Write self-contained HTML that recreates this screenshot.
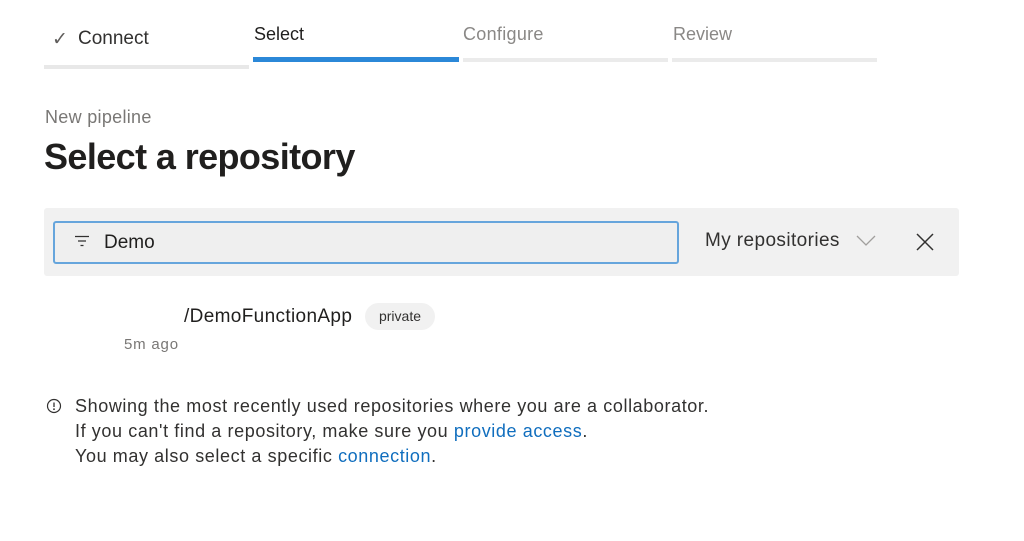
<!DOCTYPE html>
<html><head><meta charset="utf-8"><style>
body{margin:0;width:1024px;height:541px;background:#fff;font-family:"Liberation Sans",sans-serif;position:relative;overflow:hidden;color:#201f1e}
.a{position:absolute;white-space:nowrap}
</style></head><body>
<div class="a" style="left:52px;top:28px;font-size:19px;color:#605e5c">✓</div>
<div class="a" style="left:78px;top:28px;font-size:19px;color:#323130">Connect</div>
<div class="a" style="left:44px;top:65px;width:205px;height:4px;background:#e8e8e8"></div>
<div class="a" style="left:254px;top:24px;font-size:18px;color:#201f1e">Select</div>
<div class="a" style="left:253px;top:57px;width:206px;height:5px;background:#2b88d8"></div>
<div class="a" style="left:463px;top:24px;font-size:18px;color:#8a8886;letter-spacing:0.3px">Configure</div>
<div class="a" style="left:463px;top:58px;width:205px;height:4px;background:#ebebeb"></div>
<div class="a" style="left:673px;top:24px;font-size:18px;color:#8a8886">Review</div>
<div class="a" style="left:672px;top:58px;width:205px;height:4px;background:#ebebeb"></div>
<div class="a" style="left:45px;top:107px;font-size:18px;color:#797775;letter-spacing:0.3px">New pipeline</div>
<div class="a" style="left:44px;top:136px;font-size:36px;font-weight:bold;letter-spacing:-0.6px">Select a repository</div>
<div class="a" style="left:44px;top:208px;width:915px;height:68px;background:#f1f1f1;border-radius:3px"></div>
<div class="a" style="left:53px;top:221px;width:622px;height:39px;border:2px solid #66a5dc;border-radius:3px;background:#efefef"></div>
<svg class="a" style="left:74px;top:235px" width="16" height="12"><path d="M1 1.5h14M4 6h8M6.5 10.5h3" stroke="#323130" stroke-width="1.2"/></svg>
<div class="a" style="left:104px;top:232px;font-size:19px">Demo</div>
<div class="a" style="left:705px;top:230px;font-size:19px;color:#323130;letter-spacing:0.4px">My repositories</div>
<svg class="a" style="left:856px;top:235px" width="20" height="12"><path d="M1 1l9 9 9-9" stroke="#a19f9d" stroke-width="1.3" fill="none"/></svg>
<svg class="a" style="left:916px;top:233px" width="18" height="18"><path d="M1 1l16 16M17 1L1 17" stroke="#323130" stroke-width="1.5"/></svg>
<div class="a" style="left:184px;top:306px;font-size:19px;letter-spacing:0.35px">/DemoFunctionApp</div>
<div class="a" style="left:365px;top:303px;width:70px;height:27px;border-radius:14px;background:#f1f1f1;font-size:14px;line-height:27px;text-align:center;color:#323130">private</div>
<div class="a" style="left:124px;top:336px;font-size:15px;color:#797775;letter-spacing:0.8px">5m ago</div>
<svg class="a" style="left:46px;top:398px" width="16" height="16"><circle cx="8" cy="8" r="6.5" stroke="#323130" stroke-width="1.2" fill="none"/><path d="M8 4.5v4.5" stroke="#323130" stroke-width="1.3"/><circle cx="8" cy="11.2" r="0.9" fill="#323130"/></svg>
<div class="a" style="left:75px;top:394px;font-size:18px;line-height:25px;color:#323130;letter-spacing:0.6px">Showing the most recently used repositories where you are a collaborator.<br>If you can't find a repository, make sure you <span style="color:#106ebe">provide access</span>.<br>You may also select a specific <span style="color:#106ebe">connection</span>.</div>
</body></html>
